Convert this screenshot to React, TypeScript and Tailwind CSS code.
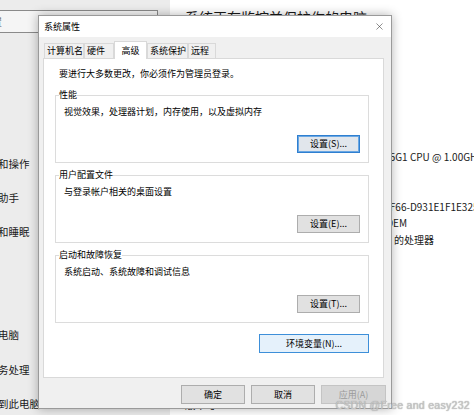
import { X } from 'lucide-react'

const navItems = [
  '显示',
  '声音',
  '通知和操作',
  '专注助手',
  '电源和睡眠',
  '电池',
  '存储',
  '平板电脑',
  '多任务处理',
  '投影到此电脑',
  '体验共享',
]

const specs: [string, string][] = [
  ['处理器', 'Intel(R) Core(TM) i5-1035G1 CPU @ 1.00GHz'],
  ['', '1.19 GHz'],
  ['机带 RAM', '8.00 GB (7.78 GB 可用)'],
  ['设备 ID', '3A9C52B1-7D44-4C1A-8F66-D931E1F1E325'],
  ['产品 ID', '00342-35861-23657-AAOEM'],
  ['系统类型', '64 位操作系统，基于 x64 的处理器'],
]

const tabs = [
  { label: '计算机名', w: 'w-[40px]' },
  { label: '硬件', w: 'w-[30px]' },
  { label: '高级', w: 'w-[33px]', active: true },
  { label: '系统保护', w: 'w-[41px]' },
  { label: '远程', w: 'w-[28px]' },
]

const btn = 'h-[18px] border text-[9px] leading-[12px] flex items-center justify-center'
const btnNormal = `${btn} bg-[#e1e1e1] border-[#adadad]`

function GroupBox({
  title,
  text,
  button,
  focused,
  className = '',
}: {
  title: string
  text: string
  button: string
  focused?: boolean
  className?: string
}) {
  return (
    <fieldset className={`w-[314px] border border-[#dcdcdc] px-[3px] pb-[9px] ${className}`}>
      <legend className="text-[9px] leading-[12px] text-black">{title}</legend>
      <p className="ml-[5px] mt-[5px] text-[9px] leading-[12px]">{text}</p>
      <div className="mt-[17px] flex justify-end pr-[5px]">
        <button
          className={
            focused
              ? `${btn} w-[63px] bg-[#e1e6ec] border-[#2f7fd0] shadow-[inset_0_0_0_1px_#6aa7e3]`
              : `${btnNormal} w-[63px]`
          }
        >
          {button}
        </button>
      </div>
    </fieldset>
  )
}

function SystemPropertiesDialog() {
  return (
    <div className="absolute left-[38px] top-[15px] flex h-[394px] w-[354px] flex-col border border-[#9a9a9a] bg-[#f0f0f0] font-['Noto_Sans_CJK_SC',sans-serif] text-black shadow-[0_0_10px_rgba(0,0,0,0.3)]">
      <div className="flex h-[21px] shrink-0 items-center justify-between bg-white pl-[5px] pr-[6px]">
        <span className="text-[9px] leading-[12px]">系统属性</span>
        <X size={11} strokeWidth={1.2} className="text-[#333]" />
      </div>

      <div className="flex h-[21px] items-end pl-[5px]">
        {tabs.map((t) =>
          t.active ? (
            <div
              key={t.label}
              className={`${t.w} relative z-10 -mb-px flex h-[18px] items-center justify-center border border-b-0 border-[#d9d9d9] bg-white text-[9px] leading-[12px]`}
            >
              {t.label}
            </div>
          ) : (
            <div
              key={t.label}
              className={`${t.w} flex h-[15px] items-center border border-b-0 border-[#d9d9d9] bg-[#f0f0f0] pl-[2px] text-[9px] leading-[12px]`}
            >
              {t.label}
            </div>
          ),
        )}
      </div>

      <div className="ml-[4px] flex h-[320px] w-[341px] flex-col border border-[#d9d9d9] bg-white pl-[11px] pt-[9px]">
        <p className="pl-[4px] text-[9px] leading-[12px]">要进行大多数更改，你必须作为管理员登录。</p>
        <GroupBox
          className="mt-[9px]"
          title="性能"
          text="视觉效果，处理器计划，内存使用，以及虚拟内存"
          button="设置(S)..."
          focused
        />
        <GroupBox
          className="mt-[6px]"
          title="用户配置文件"
          text="与登录帐户相关的桌面设置"
          button="设置(E)..."
        />
        <GroupBox
          className="mt-[6px]"
          title="启动和故障恢复"
          text="系统启动、系统故障和调试信息"
          button="设置(T)..."
        />
        <div className="mt-[11px] flex w-[314px] justify-end">
          <button className={`${btn} h-[19px] w-[110px] border-[#3d8fd9] bg-[#e5f1fb]`}>环境变量(N)...</button>
        </div>
      </div>

      <div className="mt-[7px] flex justify-end gap-[6px] pr-[5px]">
        <button className={`${btnNormal} h-[19px] w-[64px]`}>确定</button>
        <button className={`${btnNormal} h-[19px] w-[64px]`}>取消</button>
        <button className={`${btn} h-[19px] w-[65px] border-[#c4c4c4] bg-[#d6d6d6] text-[#9b9b9b]`}>应用(A)</button>
      </div>
    </div>
  )
}

export default function App() {
  return (
    <div className="relative h-[415px] w-[474px] overflow-hidden bg-white font-['Noto_Sans_CJK_SC',sans-serif] text-[#1a1a1a]">
      <div className="flex h-full">
        {/* settings navigation */}
        <aside className="-ml-[60px] w-[230px] shrink-0 bg-[#ececec]">
          <div className="ml-[15px] mt-[10px] flex h-[23px] w-[203px] items-center border border-[#8a8a8a] bg-[#f5f5f5] pl-[4px] text-[10.5px] text-[#555]">
            查找设置
          </div>
          <div className="ml-[15px] mt-[33px] h-[12px] text-[12px] font-semibold">系统</div>
          <ul>
            {navItems.map((n) => (
              <li key={n} className="flex h-[34.3px] items-center pl-[8px]">
                <span className="h-[14px] w-[16px] shrink-0" />
                <span className="ml-[13px] text-[10.5px] leading-[14px]">{n}</span>
              </li>
            ))}
          </ul>
        </aside>

        {/* about page */}
        <main className="flex-1 pl-[15px] pt-[9px]">
          <h1 className="text-[14px] leading-[16px] font-normal whitespace-nowrap">系统正在监控并保护你的电脑</h1>
          <div className="mt-[124px] text-[10px] leading-[16.5px] whitespace-nowrap">
            {specs.map(([k, v], i) => (
              <div key={i} className="flex">
                <span className="w-[95px] shrink-0">{k}</span>
                <span>{v}</span>
              </div>
            ))}
          </div>
          <div className="mt-[150px] flex text-[10.5px] leading-[14px] whitespace-nowrap">
            <span className="w-[100px] shrink-0">版本号</span>
            <span>22H2</span>
          </div>
        </main>
      </div>

      <SystemPropertiesDialog />

      <span className="absolute bottom-[4px] right-[4px] font-['Liberation_Sans',sans-serif] text-[10.5px] leading-[12px] tracking-[0.3px] text-[#c9c9c9] [text-shadow:0_0_1px_#8a8a8a]">
        CSDN @Free and easy232
      </span>
    </div>
  )
}
